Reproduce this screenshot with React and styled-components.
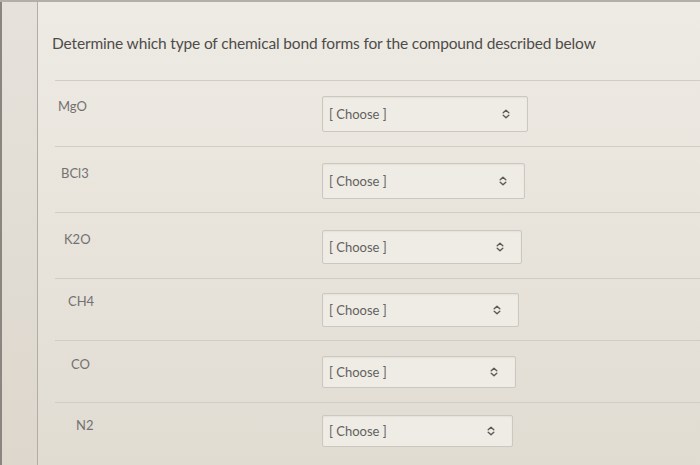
import React from "react";
import styled, { createGlobalStyle } from "styled-components";

const GlobalStyle = createGlobalStyle`
  html, body {
    margin: 0;
    padding: 0;
    height: 100%;
    overflow: hidden;
  }
  body {
    font-family: Lato, "Open Sans", "Liberation Sans", sans-serif;
    background: #e6e2da;
  }
`;

const Screen = styled.div`
  display: flex;
  width: 700px;
  height: 465px;
  overflow: hidden;
  border-top: 2px solid #b3afa8;
  box-sizing: border-box;
`;

const SideStrip = styled.div`
  width: 38px;
  flex-shrink: 0;
  background: linear-gradient(180deg, #e6e2db 0%, #ddd7cd 100%);
  border-left: 2px solid #8a857e;
  border-right: 1px solid #b2ada5;
  box-sizing: border-box;
`;

const Panel = styled.main`
  flex: 1;
  background: linear-gradient(180deg, #eeebe4 0%, #e8e4dc 50%, #e1dcd2 100%);
  padding: 32px 0 0 14px;
  box-sizing: border-box;
`;

const Title = styled.h1`
  margin: 0 0 27px;
  font-size: 15.5px;
  font-weight: 400;
  line-height: 19px;
  color: #4e4c4a;
  letter-spacing: -0.15px;
`;

const List = styled.div`
  display: flex;
  flex-direction: column;
  margin-left: 3px;
`;

const Row = styled.div`
  display: grid;
  grid-template-columns: 267px auto;
  align-items: start;
  height: ${(p) => p.$h}px;
  border-top: 1px solid #d2cdc4;
  box-sizing: border-box;
`;

const Label = styled.div`
  padding: ${(p) => p.$top}px 0 0 ${(p) => p.$indent}px;
  font-size: 13px;
  line-height: 16px;
  color: #737170;
`;

const SelectBox = styled.div`
  display: flex;
  align-items: center;
  justify-content: space-between;
  width: ${(p) => p.$w}px;
  height: ${(p) => p.$hh}px;
  margin-top: ${(p) => p.$top}px;
  padding: 0 17px 0 6px;
  box-sizing: border-box;
  background: #efece6;
  border: 1px solid #cdc8bf;
  border-radius: 2px;
  box-shadow: inset 0 1px 2px rgba(0, 0, 0, 0.05);
  font-size: 13px;
  color: #63615e;
`;

const Chevrons = () => (
  <svg width="8" height="10" viewBox="0 0 8 10" fill="none">
    <path
      d="M1.2 3.8 L4 1.2 L6.8 3.8 M1.2 6.2 L4 8.8 L6.8 6.2"
      stroke="#5c5a57"
      strokeWidth="1.4"
      strokeLinecap="round"
      strokeLinejoin="round"
    />
  </svg>
);

const rows = [
  { name: "MgO", h: 66, indent: 3, labelTop: 17, selTop: 15, w: 206, hh: 36 },
  { name: "BCl3", h: 66, indent: 6, labelTop: 18, selTop: 16, w: 203, hh: 36 },
  { name: "K2O", h: 66, indent: 9, labelTop: 18, selTop: 17, w: 200, hh: 34 },
  { name: "CH4", h: 62, indent: 13, labelTop: 14, selTop: 14, w: 197, hh: 34 },
  { name: "CO", h: 62, indent: 16, labelTop: 15, selTop: 15, w: 194, hh: 32 },
  { name: "N2", h: 70, indent: 21, labelTop: 14, selTop: 12, w: 191, hh: 32 },
];

export default function App() {
  return (
    <>
      <GlobalStyle />
      <Screen>
        <SideStrip />
        <Panel>
          <Title>Determine which type of chemical bond forms for the compound described below</Title>
          <List>
            {rows.map((r) => (
              <Row key={r.name} $h={r.h}>
                <Label $indent={r.indent} $top={r.labelTop}>
                  {r.name}
                </Label>
                <SelectBox $w={r.w} $hh={r.hh} $top={r.selTop}>
                  <span>[ Choose ]</span>
                  <Chevrons />
                </SelectBox>
              </Row>
            ))}
          </List>
        </Panel>
      </Screen>
    </>
  );
}
